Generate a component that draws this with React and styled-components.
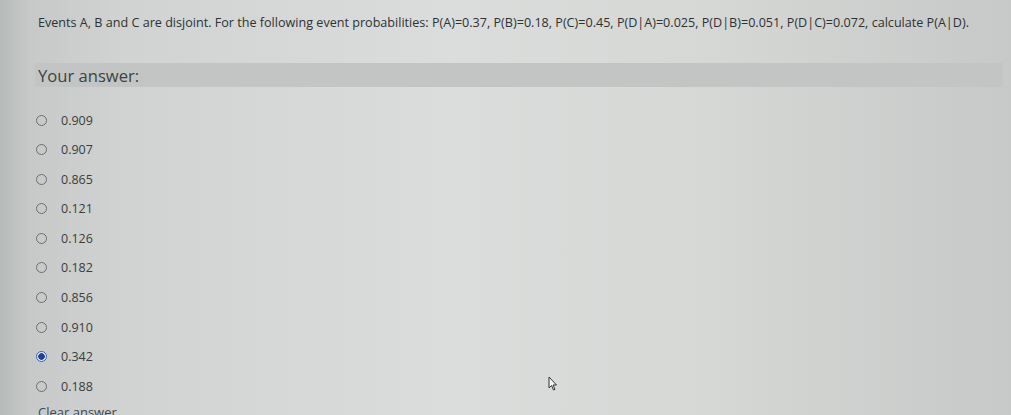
import styled, { createGlobalStyle } from 'styled-components';

const GlobalStyle = createGlobalStyle`
  html, body {
    margin: 0;
    padding: 0;
  }
  body {
    width: 1011px;
    height: 415px;
    overflow: hidden;
    font-family: "Open Sans", "Noto Sans", sans-serif;
    background: linear-gradient(
      90deg,
      #b7bbb9 0px,
      #c6c9c7 30px,
      #d0d3d1 120px,
      #dadddb 450px,
      #d6d8d6 700px,
      #c7c9c8 1011px
    );
  }
`;

const Page = styled.div`
  padding: 15px 0 0 38px;
`;

const Question = styled.p`
  margin: 0;
  font-size: 12.6px;
  line-height: 16px;
  color: #2e3232;
  white-space: nowrap;
`;

const AnswerBar = styled.div`
  margin: 32px 8px 0 -3px;
  height: 24px;
  display: flex;
  align-items: center;
  padding-left: 3px;
  background: #c2c5c3;
  font-size: 16.6px;
  color: #3e4241;
`;

const Options = styled.ul`
  list-style: none;
  margin: 24px 0 0 0;
  padding: 0;
  display: flex;
  flex-direction: column;
  gap: 11.6px;
`;

const Option = styled.li`
  display: flex;
  align-items: center;
  height: 18px;
  font-size: 12.5px;
  color: #3a3e3d;
`;

const Radio = styled.span`
  box-sizing: border-box;
  width: 11px;
  height: 11px;
  border-radius: 50%;
  margin-left: -2px;
  margin-right: 14px;
  border: 1px solid ${(p) => (p.checked ? '#3a66b8' : '#6b6f6e')};
  background: ${(p) =>
    p.checked ? 'radial-gradient(circle, #1e3f9a 0 3px, #e3e6ee 3.5px)' : 'transparent'};
`;

const ClearAnswer = styled.div`
  margin-top: 8px;
  font-size: 13px;
  color: #3e4a55;
`;

const Cursor = styled.svg`
  position: absolute;
  left: 548px;
  top: 376px;
`;

const answers = ['0.909', '0.907', '0.865', '0.121', '0.126', '0.182', '0.856', '0.910', '0.342', '0.188'];

const App = () => {
  return (
    <>
      <GlobalStyle />
      <Page>
        <Question>
          Events A, B and C are disjoint. For the following event probabilities: P(A)=0.37, P(B)=0.18,
          P(C)=0.45, P(D|A)=0.025, P(D|B)=0.051, P(D|C)=0.072, calculate P(A|D).
        </Question>
        <AnswerBar>Your answer:</AnswerBar>
        <Options>
          {answers.map((a) => (
            <Option key={a}>
              <Radio checked={a === '0.342'} />
              {a}
            </Option>
          ))}
        </Options>
        <ClearAnswer>Clear answer</ClearAnswer>
      </Page>
      <Cursor width="10" height="15" viewBox="0 0 10 15">
        <path d="M1 1 L1 12 L3.5 9.5 L5.5 14 L7 13.3 L5 9 L8.5 9 Z" fill="#f4f4f4" stroke="#333" strokeWidth="1" />
      </Cursor>
    </>
  );
};

export default App;
